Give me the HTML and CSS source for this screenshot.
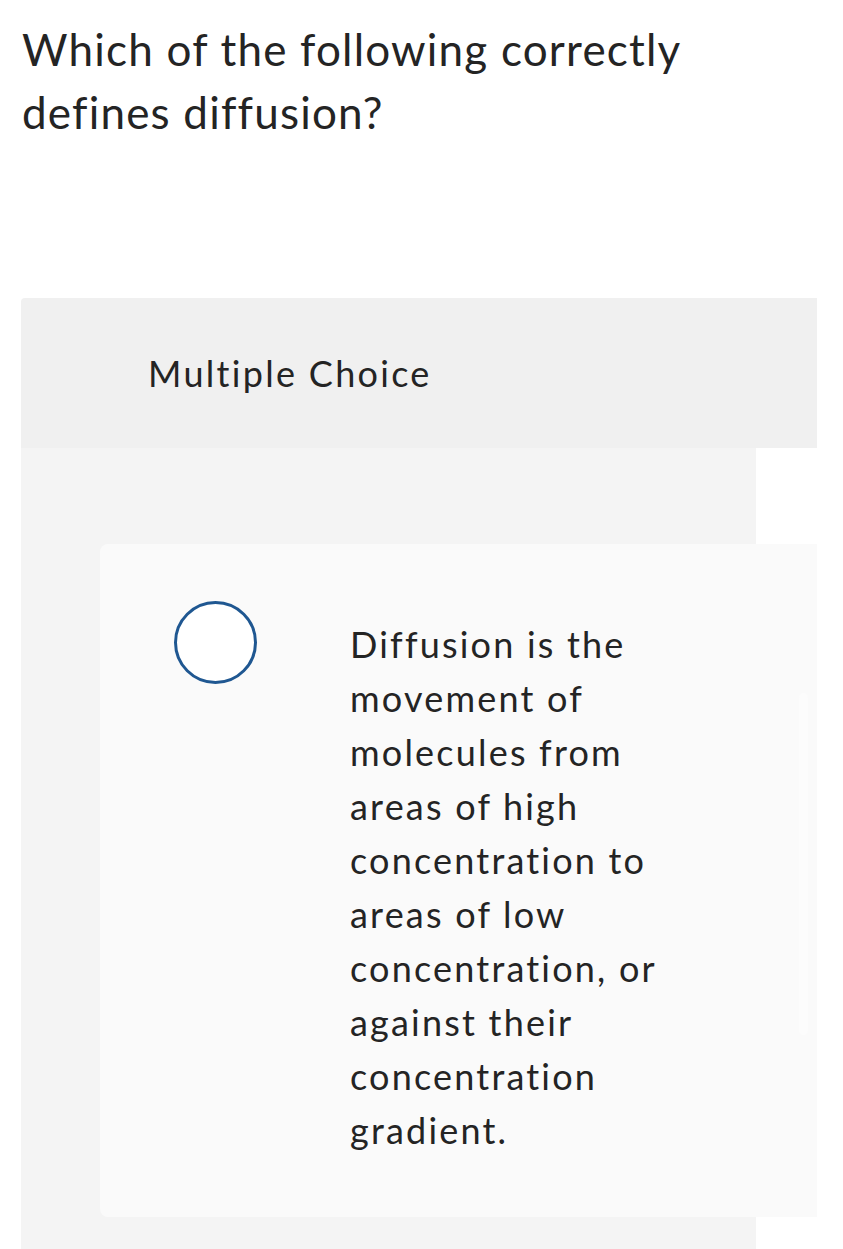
FILE: index.html
```html
<!DOCTYPE html>
<html lang="en">
<head>
<meta charset="utf-8">
<title>Multiple Choice</title>
<link rel="stylesheet" href="styles.css">
</head>
<body>
  <h1 class="question">Which of the following correctly defines diffusion?</h1>
  <section class="mc">
    <header class="mc-head">Multiple Choice</header>
    <div class="mc-body">
      <label class="card">
        <span class="radio"></span>
        <span class="answer">Diffusion is the movement of molecules from areas of high concentration to areas of low concentration, or against their concentration gradient.</span>
        <span class="scroll-thumb"></span>
      </label>
    </div>
  </section>
</body>
</html>
```
FILE: styles.css
```css
html, body {
  margin: 0;
  padding: 0;
  background: #ffffff;
}
body {
  font-family: "Lato", "Liberation Sans", sans-serif;
  color: #242424;
  font-variant-ligatures: none;
}
.question {
  margin: 0;
  padding: 18px 0 0 22px;
  font-size: 44px;
  line-height: 63px;
  font-weight: 400;
  letter-spacing: 1.2px;
  width: 720px;
}
.mc {
  margin: 154px 0 0 21px;
  width: 796px;
}
.mc-head {
  height: 150px;
  background: #f0f0f0;
  border-radius: 4px 0 0 0;
  box-sizing: border-box;
  padding-left: 127px;
  display: flex;
  align-items: center;
  font-size: 36px;
  letter-spacing: 2.3px;
}
.mc-body {
  width: 735px;
  background: #f4f4f4;
  box-sizing: border-box;
  padding: 96px 0 32px 79px;
}
.card {
  position: relative;
  display: flex;
  align-items: flex-start;
  width: 717px;
  box-sizing: border-box;
  background: #fafafa;
  border-radius: 8px 0 0 8px;
  padding: 57px 0 60px 74px;
}
.radio {
  flex: none;
  width: 83px;
  height: 83px;
  box-sizing: border-box;
  border: 3px solid #1f5791;
  border-radius: 50%;
  background: #ffffff;
}
.answer {
  margin: 16px 0 0 93px;
  width: 345px;
  font-size: 36px;
  line-height: 54px;
  letter-spacing: 2.2px;
}
.scroll-thumb {
  position: absolute;
  left: 699px;
  top: 149px;
  width: 9px;
  height: 342px;
  border-radius: 5px;
  background: #fcfcfc;
}
```
